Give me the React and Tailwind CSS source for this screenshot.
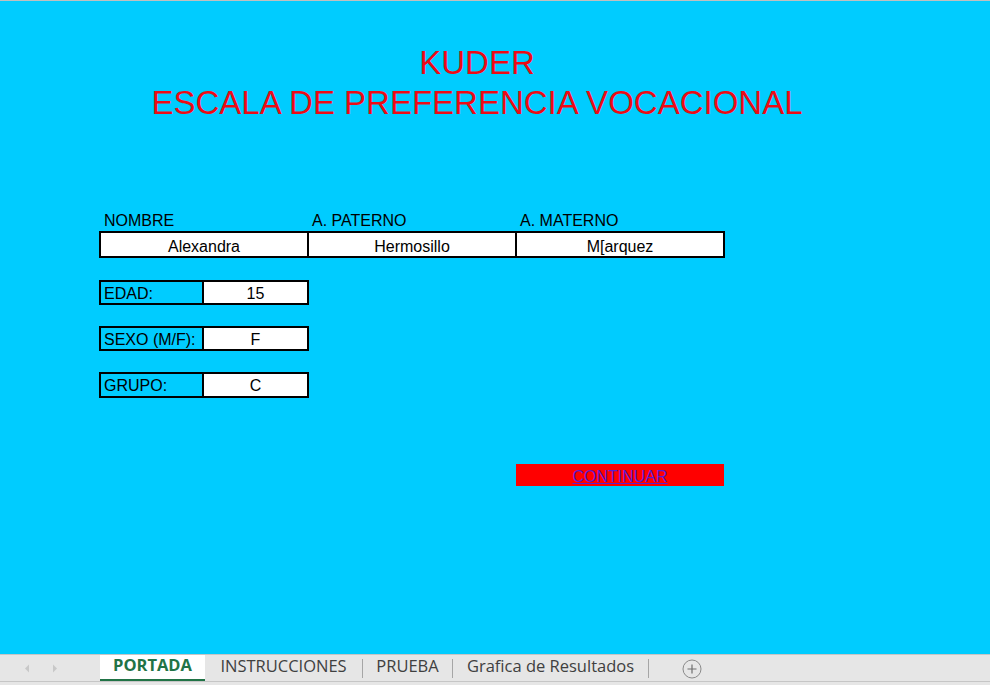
import React from 'react';

const arial = { fontFamily: '"Liberation Sans", Arial, sans-serif' };

const NameRow = ({ values }) => (
    <div className="flex w-[626px] h-[27px] border-2 border-black bg-white">
        {values.map((v, i) => (
            <div
                key={i}
                className={`flex-1 flex items-center justify-center pt-[4px] text-[16px] text-black ${i < values.length - 1 ? 'border-r-2 border-black' : ''}`}
            >
                {v}
            </div>
        ))}
    </div>
);

const FieldRow = ({ label, value, className = '' }) => (
    <div className={`flex w-[210px] h-[25px] border-2 border-black ${className}`}>
        <div className="w-[103px] border-r-2 border-black flex items-center pl-[3px] pt-[2px] text-[16px] text-black">{label}</div>
        <div className="flex-1 bg-white flex items-center justify-center pt-[2px] text-[16px] text-black">{value}</div>
    </div>
);

const Sheet = () => (
    <div className="flex-1 bg-[#00ccff]" style={arial}>
        <div className="w-[954px] pt-[42px] text-center text-[33px] leading-[40px] text-[#ee0a14]">
            <div>KUDER</div>
            <div>ESCALA DE PREFERENCIA VOCACIONAL</div>
        </div>

        <div className="ml-[99px] mt-[87px] flex flex-col">
            <div className="flex h-[21px] text-[16px] leading-[22px] text-black">
                <div className="w-[208px] pl-[5px]">NOMBRE</div>
                <div className="w-[208px] pl-[5px]">A. PATERNO</div>
                <div className="w-[208px] pl-[5px]">A. MATERNO</div>
            </div>
            <NameRow values={['Alexandra', 'Hermosillo', 'M[arquez']} />

            <FieldRow label="EDAD:" value="15" className="mt-[22px]" />
            <FieldRow label="SEXO (M/F):" value="F" className="mt-[21px]" />
            <FieldRow label="GRUPO:" value="C" className="mt-[21px] h-[26px]" />

            <div className="ml-[417px] mt-[66px] w-[208px] h-[22px] bg-[#ff0000] flex items-center justify-center pt-[4px]">
                <a href="#" className="text-[16px] leading-[18px] text-[#5a1cd0] underline underline-offset-[1px]">
                    CONTINUAR
                </a>
            </div>
        </div>
    </div>
);

const Tab = ({ label, width, active }) =>
    active ? (
        <div
            className={`${width} h-[26px] bg-white border-b-2 border-[#217346] flex items-center justify-center pb-[3px] text-[16.5px] font-bold text-[#217346]`}
        >
            {label}
        </div>
    ) : (
        <div className={`${width} h-[26px] flex items-center justify-center pb-[3px] text-[16.5px] text-[#404040]`}>
            {label}
        </div>
    );

const Sep = () => <div className="w-px h-[19px] bg-[#a6a6a6]" />;

const TabBar = () => (
    <div
        className="h-[31px] bg-[#e6e6e6] border-t border-[#c6c6c6] flex flex-col"
        style={{ fontFamily: '"Open Sans", "Noto Sans", sans-serif' }}
    >
        <div className="h-[27px] flex items-start border-b border-[#c6c6c6]">
            <div className="w-[100px] h-[26px] flex items-center">
                <svg width="6" height="9" viewBox="0 0 6 9" className="ml-[24px]">
                    <path d="M5 0.5 L1 4.5 L5 8.5 Z" fill="#c8c8c8" />
                </svg>
                <svg width="6" height="9" viewBox="0 0 6 9" className="ml-[22px]">
                    <path d="M1 0.5 L5 4.5 L1 8.5 Z" fill="#c8c8c8" />
                </svg>
            </div>
            <Tab label="PORTADA" width="w-[105px]" active />
            <Tab label="INSTRUCCIONES" width="w-[157px]" />
            <div className="h-[26px] flex items-center"><Sep /></div>
            <Tab label="PRUEBA" width="w-[89px]" />
            <div className="h-[26px] flex items-center"><Sep /></div>
            <Tab label="Grafica de Resultados" width="w-[195px]" />
            <div className="h-[26px] flex items-center"><Sep /></div>
            <div className="h-[28px] flex items-center ml-[33px]">
                <svg width="20" height="20" viewBox="0 0 20 20">
                    <circle cx="10" cy="10" r="9" fill="none" stroke="#8a8a8a" strokeWidth="1" />
                    <path d="M10 5.5 V14.5 M5.5 10 H14.5" stroke="#6e6e6e" strokeWidth="1.2" />
                </svg>
            </div>
        </div>
    </div>
);

const App = () => (
    <div className="w-[990px] h-[685px] flex flex-col border-t border-[#c0c0c0] overflow-hidden">
        <Sheet />
        <TabBar />
    </div>
);

export default App;
